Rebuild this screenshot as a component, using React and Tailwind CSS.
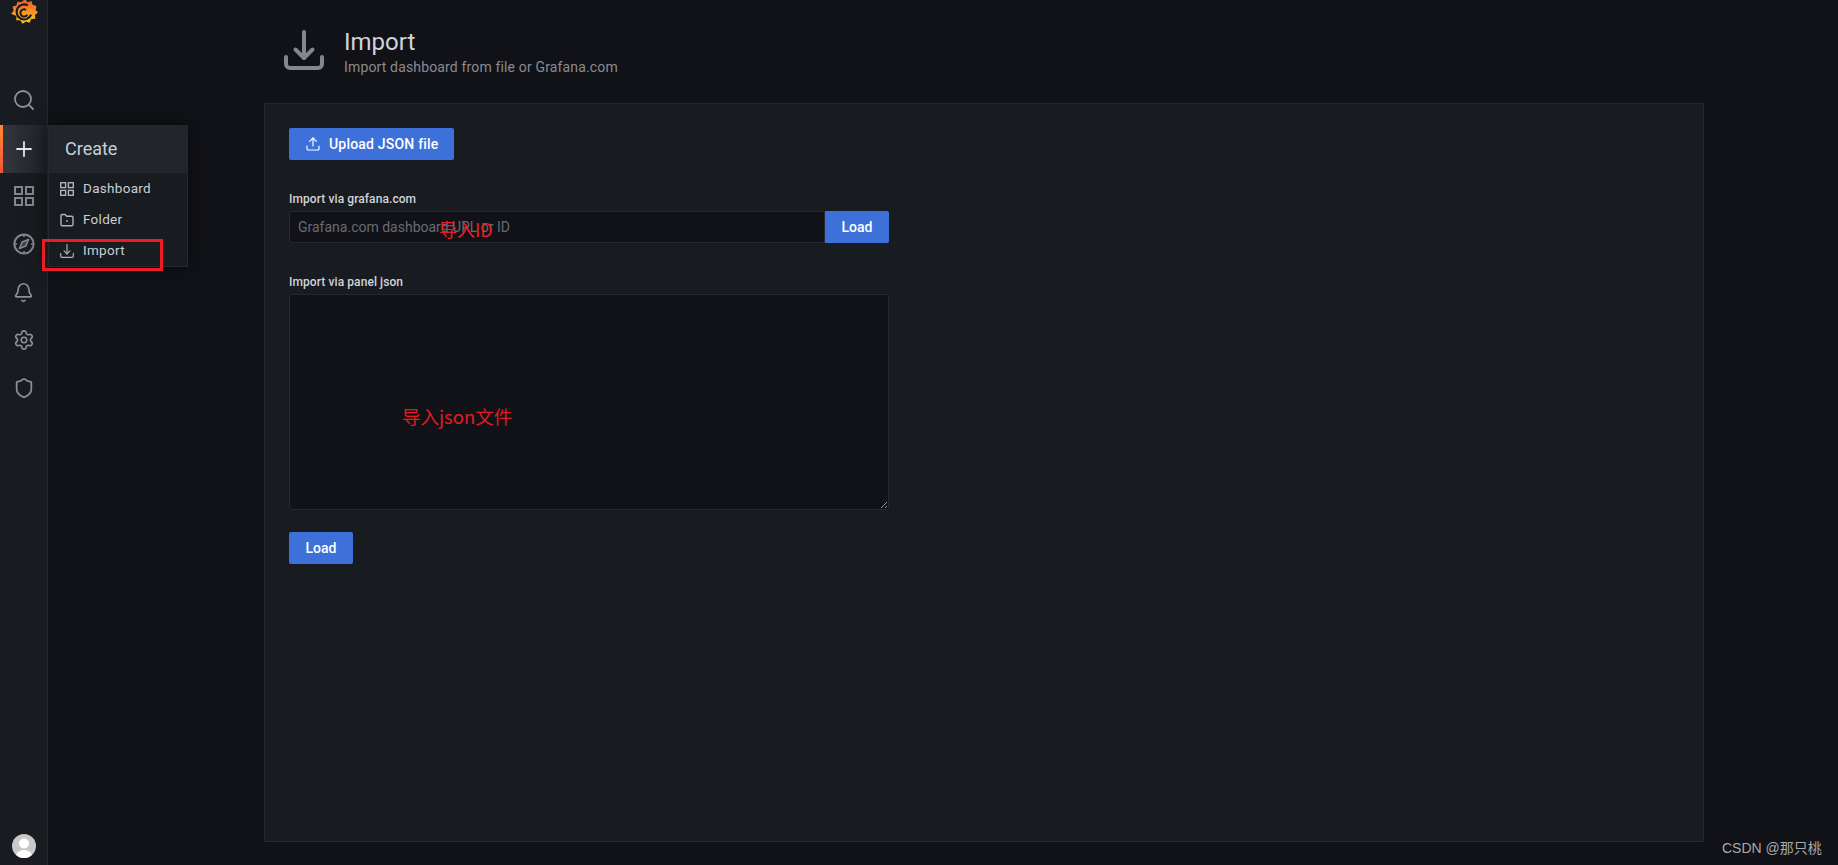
import React from "react";
import { Search, Plus, Bell, Settings, Shield, Upload } from "lucide-react";

function Logo() {
  return (
    <svg width="28" height="29" viewBox="0 0 26 27" className="-mt-[2px]">
      <defs>
        <linearGradient id="g" x1="0" y1="1" x2="0" y2="0">
          <stop offset="0" stopColor="#fcc81c" />
          <stop offset="1" stopColor="#f05a28" />
        </linearGradient>
      </defs>
      <path d="M14 1l2.4 3 3.6-1.2 1 3.6 3.6 1-.8 3.6 2.2 2.4-2.8 2.4.4 3.6-3.8.2-1.6 3.400-3.4-1.200-3.200 2.200-2-3.200-3.800-.2.2-3.800L1 14.600l2.400-2.800L2.400 8l3.600-1 .8-3.600 3.600.6z" fill="url(#g)" />
      <path d="M19.600 15.500a7 7 0 1 1-3-8.600" fill="none" stroke="#181b1f" strokeWidth="2" />
      <path d="M16 15.600a3.400 3.400 0 1 1-1.200-4.600" fill="none" stroke="#181b1f" strokeWidth="1.800" />
    </svg>
  );
}

function GridIcon({ size, className }) {
  return (
    <svg width={size} height={size} viewBox="0 0 20 20" fill="none" stroke="currentColor" strokeWidth="2" className={className}>
      <rect x="1" y="1" width="7" height="7" />
      <rect x="12" y="1" width="7" height="7" />
      <rect x="1" y="12" width="7" height="7" />
      <rect x="12" y="12" width="7" height="7" />
    </svg>
  );
}

function CompassIcon({ className }) {
  return (
    <svg width="22" height="22" viewBox="0 0 22 22" fill="none" stroke="currentColor" className={className}>
      <circle cx="11" cy="11" r="9.600" strokeWidth="2" />
      <path d="M11 1.500v2.500M11 18v2.500M1.500 11h2.500M18 11h2.500" strokeWidth="1.600" />
      <path d="M15.500 6.500l-2.600 6.400-6.400 2.600 2.600-6.400z" fill="currentColor" fillOpacity="0.35" strokeWidth="1.600" strokeLinejoin="round" />
    </svg>
  );
}

function ImportIcon({ size, width, className }) {
  return (
    <svg width={size} height={size} viewBox="0 0 40 40" fill="none" stroke="currentColor" strokeWidth={width} strokeLinecap="round" strokeLinejoin="round" className={className}>
      <path d="M20 2v26" />
      <path d="M11.500 19.500l8.500 8.500 8.500-8.500" />
      <path d="M2 27v7a4 4 0 0 0 4 4h28a4 4 0 0 0 4-4v-7" />
    </svg>
  );
}

function FolderIcon({ className }) {
  return (
    <svg width="14" height="14" viewBox="0 0 14 14" fill="none" stroke="currentColor" strokeWidth="1.400" strokeLinejoin="round" className={className}>
      <path d="M1 2.700a1.200 1.200 0 0 1 1.200-1.200h3l1.500 1.800h5.100A1.200 1.200 0 0 1 13 4.500v7a1.200 1.200 0 0 1-1.200 1.200H2.200A1.200 1.200 0 0 1 1 11.500z" />
      <circle cx="7" cy="8" r="0.900" fill="currentColor" stroke="none" />
    </svg>
  );
}

function NavItem({ children, active }) {
  return (
    <div className={"relative flex h-12 w-full items-center justify-center " + (active ? "bg-gradient-to-r from-[#34373d] to-[#1f2227]" : "")}>
      {active && <div className="absolute left-0 top-0 h-12 w-[3px] bg-gradient-to-b from-[#ff8833] to-[#f0553a]" />}
      {children}
    </div>
  );
}

function MenuRow({ icon, label }) {
  return (
    <div className="flex h-[31px] items-center pl-[11px] text-[13.500px] text-[#c7d0d9]">
      <span className="flex w-[22px] items-center text-[#b0b3b8]">{icon}</span>
      <span className="ml-[1px] tracking-[0.3px]">{label}</span>
    </div>
  );
}

function Label({ children, className }) {
  return <div className={"text-[12px] font-medium leading-[14px] tracking-[0.08px] text-[#d0d4da] " + (className || "")}>{children}</div>;
}

export default function App() {
  return (
    <div className="relative flex h-[865px] w-[1838px] overflow-hidden bg-[#111217] font-['Roboto','Noto_Sans_CJK_SC',sans-serif]">
      <aside className="flex h-full w-[48px] shrink-0 flex-col items-center border-r border-[#25282d] bg-[#181b1f]">
        <div className="flex h-[76px] w-full justify-center">
          <Logo />
        </div>
        <NavItem><Search size={24} strokeWidth={1.800} className="text-[#8e9095]" /></NavItem>
        <div className="h-px w-full" />
        <NavItem active><Plus size={24} strokeWidth={1.800} className="text-[#e6e8ea]" /></NavItem>
        <div className="-mt-px" />
        <NavItem><GridIcon size={20} className="text-[#85868c]" /></NavItem>
        <NavItem><CompassIcon className="text-[#85868c]" /></NavItem>
        <NavItem><Bell size={21} strokeWidth={1.900} className="text-[#8e9095]" /></NavItem>
        <NavItem><Settings size={22} strokeWidth={1.800} className="text-[#8e9095]" /></NavItem>
        <NavItem><Shield size={22} strokeWidth={1.900} className="text-[#8e9095]" /></NavItem>
        <div className="mt-auto mb-[7px] flex h-6 w-6 items-end justify-center overflow-hidden rounded-full bg-[#c9c9c9]">
          <svg width="24" height="24" viewBox="0 0 24 24">
            <circle cx="12" cy="9.500" r="5" fill="#fff" />
            <path d="M3 24c1-6 5-8 9-8s8 2 9 8z" fill="#fff" />
          </svg>
        </div>
      </aside>

      <main className="flex min-w-0 flex-1 flex-col pl-[216px] pr-[134px]">
        <header className="flex h-[103px] shrink-0 items-start pl-[20px] pt-[30px]">
          <ImportIcon size={40} width={4} className="text-[#85868c]" />
          <div className="ml-[20px] -mt-[2px]">
            <div className="text-[24px] leading-[28px] text-[#d0d4da]">Import</div>
            <div className="mt-[3px] text-[14px] leading-[16px] tracking-[0.15px] text-[#8a8b90]">Import dashboard from file or Grafana.com</div>
          </div>
        </header>

        <section className="mb-[23px] flex min-h-0 flex-1 flex-col items-start border border-[#25282d] bg-[#181b1f] pl-[24px] pt-[24px]">
          <button className="flex h-[32px] w-[165px] items-center rounded-[2px] bg-[#3d71d9] pl-[16px] text-[14px] font-medium tracking-[0.2px] text-white">
            <Upload size={16} strokeWidth={1.800} />
            <span className="ml-[8px]">Upload JSON file</span>
          </button>

          <Label className="mt-[32px]">Import via grafana.com</Label>
          <div className="mt-[5px] flex h-[32px] w-[600px]">
            <input
              readOnly
              placeholder="Grafana.com dashboard URL or ID"
              className="h-full min-w-0 flex-1 rounded-l-[2px] border border-[#25282d] bg-[#111217] px-[8px] text-[14px] outline-none placeholder:text-[#6a6b70]"
            />
            <button className="h-full w-[64px] rounded-r-[2px] bg-[#3d71d9] text-[14px] font-medium text-white">Load</button>
          </div>

          <Label className="mt-[32px]">Import via panel json</Label>
          <textarea
            readOnly
            className="mt-[5px] h-[216px] w-[600px] rounded-[2px] border border-[#25282d] bg-[#111217] outline-none"
          />

          <button className="mt-[22px] h-[32px] w-[64px] rounded-[2px] bg-[#3d71d9] text-[14px] font-medium text-white">Load</button>
        </section>
      </main>

      <div className="absolute left-[48px] top-[125px] w-[140px] border border-t-0 border-[#25282d] bg-[#181b1f] shadow-[0_0_20px_rgba(0,0,0,0.5)]">
        <div className="flex h-[48px] items-center bg-[#22252b] pb-[2px] pl-[16px] text-[18px] text-[#c7d0d9]">Create</div>
        <div className="pb-[0px]">
          <MenuRow icon={<GridIcon size={14} />} label="Dashboard" />
          <MenuRow icon={<FolderIcon />} label="Folder" />
          <MenuRow icon={<ImportIcon size={14} width={3.400} />} label="Import" />
        </div>
      </div>

      <div className="absolute left-[42px] top-[239px] h-[32px] w-[121px] border-[3px] border-[#ed1c24]" />
      <div className="absolute left-[439px] top-[217px] font-['Noto_Sans_CJK_SC',sans-serif] text-[18px] leading-[24px] text-[#ed1c24]">导入ID</div>
      <div className="absolute left-[402px] top-[404px] font-['Noto_Sans_CJK_SC',sans-serif] text-[18.500px] leading-[24px] text-[#e01b24]">导入json文件</div>
      <div className="absolute left-[1722px] top-[839px] font-['Liberation_Sans','Noto_Sans_CJK_SC',sans-serif] text-[14px] leading-[18px] text-[#a9a9a9]">CSDN @那只桃</div>
    </div>
  );
}
